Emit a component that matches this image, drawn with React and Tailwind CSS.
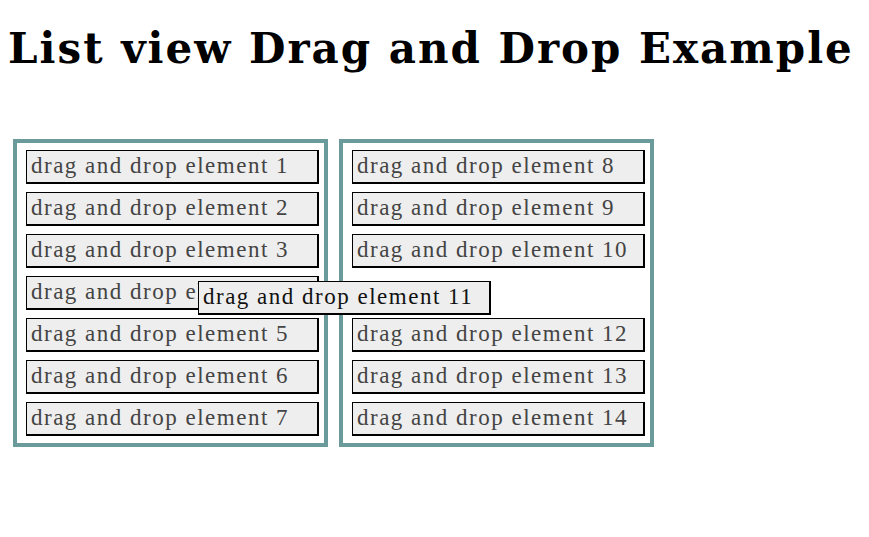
const LEFT = [1, 2, 3, 4, 5, 6, 7]
const RIGHT = [8, 9, 10, null, 12, 13, 14]

function Item({ n, dragging }) {
  return (
    <div
      className={`w-[293px] h-[34px] bg-[#eeeeee] border-t border-l border-r-2 border-b-2 border-black pl-[4px] leading-[30px] text-[23px] tracking-[1.5px] whitespace-nowrap overflow-hidden ${dragging ? 'text-[#111]' : 'text-[#444]'}`}
    >
      drag and drop element {n}
    </div>
  )
}

function List({ items }) {
  return (
    <div className="w-[315px] border-4 border-[#6a9a9a] pt-[7px] pb-[7px] pl-[9px] flex flex-col gap-[8px]">
      {items.map((n, i) => (n ? <Item key={i} n={n} /> : <div key={i} className="h-[34px]" />))}
    </div>
  )
}

export default function App() {
  return (
    <div className="bg-white w-[869px] h-[537px] overflow-hidden font-['Liberation_Serif',serif] relative">
      <h1 className="font-['DejaVu_Serif',serif] font-bold text-[42px] leading-[56px] tracking-[2px] text-black pl-[8px] pt-[21px] whitespace-nowrap">
        List view Drag and Drop Example
      </h1>
      <div className="flex gap-[11px] pl-[13px] mt-[62px]">
        <List items={LEFT} />
        <List items={RIGHT} />
      </div>
      {/* element 11 being dragged */}
      <div className="absolute left-[198px] top-[281px]">
        <Item n={11} dragging />
      </div>
    </div>
  )
}
